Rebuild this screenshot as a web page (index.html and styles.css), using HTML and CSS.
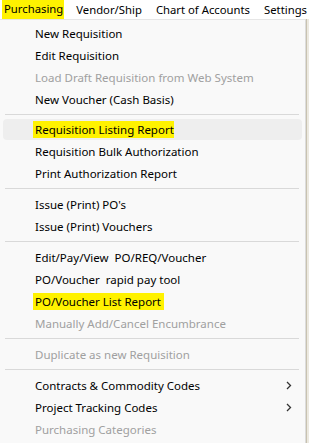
FILE: index.html
```html
<!DOCTYPE html>
<html lang="en">
<head>
    <meta charset="UTF-8">
    <meta name="viewport" content="width=device-width, initial-scale=1.0">
    <title>Purchasing Menu</title>
    <link rel="stylesheet" href="styles.css">
</head>
<body>
    <div class="menubar">
        <span class="top-item top-active">Purchasing</span>
        <span class="top-item">Vendor/Ship</span>
        <span class="top-item">Chart of Accounts</span>
        <span class="top-item top-last">Settings</span>
    </div>

    <div class="drop-area">
        <ul class="menu">
            <li class="item">New Requisition</li>
            <li class="item">Edit Requisition</li>
            <li class="item disabled">Load Draft Requisition from Web System</li>
            <li class="item">New Voucher (Cash Basis)</li>
            <li class="sep"></li>
            <li class="item hover"><span class="mark">Requisition Listing Report</span></li>
            <li class="item">Requisition Bulk Authorization</li>
            <li class="item">Print Authorization Report</li>
            <li class="sep"></li>
            <li class="item">Issue (Print) PO's</li>
            <li class="item">Issue (Print) Vouchers</li>
            <li class="sep"></li>
            <li class="item">Edit/Pay/View&nbsp; PO/REQ/Voucher</li>
            <li class="item">PO/Voucher&nbsp; rapid pay tool</li>
            <li class="item"><span class="mark">PO/Voucher List Report&nbsp;</span></li>
            <li class="item disabled">Manually Add/Cancel Encumbrance</li>
            <li class="sep"></li>
            <li class="item disabled">Duplicate as new Requisition</li>
            <li class="sep"></li>
            <li class="item">Contracts &amp; Commodity Codes
                <svg class="chevron" width="6" height="9" viewBox="0 0 6 9"><path d="M1 1l3.5 3.5L1 8" fill="none" stroke="#333" stroke-width="1.3"/></svg>
            </li>
            <li class="item">Project Tracking Codes
                <svg class="chevron" width="6" height="9" viewBox="0 0 6 9"><path d="M1 1l3.5 3.5L1 8" fill="none" stroke="#333" stroke-width="1.3"/></svg>
            </li>
            <li class="item disabled">Purchasing Categories</li>
        </ul>
        <div class="backdrop"></div>
    </div>
</body>
</html>
```

FILE: styles.css
```css
body {
    margin: 0;
    padding: 0;
    background-color: #fff;
    font-family: "Noto Sans", "Open Sans", sans-serif;
    font-size: 11.5px;
    color: #000;
}

.menubar {
    display: flex;
    height: 19px;
    align-items: stretch;
    background-color: #fff;
    white-space: nowrap;
    font-size: 11.3px;
}

.top-item {
    display: flex;
    align-items: center;
    padding: 0 7px;
}

.top-active {
    margin: 0 5px 0 2px;
    padding: 0 1px 2px 2px;
    background-color: #fff200;
}

.top-last {
    padding-right: 0;
}

.drop-area {
    display: flex;
    height: 424px;
}

.menu {
    list-style: none;
    margin: 0;
    padding: 2px 0 0 0;
    width: 305px;
    background-color: #f9f9f9;
    border-top: 1px solid #e6e6e6;
    border-right: 1px solid #dcdcdc;
}

.backdrop {
    flex: 1;
    background-color: #ece9e0;
    border-left: 1px solid #c8c2b0;
}

.item {
    display: flex;
    align-items: center;
    height: 22px;
    padding-left: 35px;
    padding-right: 13px;
    white-space: nowrap;
    overflow: hidden;
}

.item.disabled {
    color: #a0a0a0;
}

.item.hover {
    margin: 1px 3px 0 3px;
    height: 21px;
    padding-left: 32px;
    border-radius: 4px;
    background-color: #eeeeee;
}

.mark {
    background-color: #fff200;
    padding: 1px 0;
    margin-left: -2px;
    padding-left: 2px;
}

.chevron {
    margin-left: auto;
}

.sep {
    height: 1px;
    margin: 4px 6px 4px 5px;
    background-color: #d9d9d9;
}
```
